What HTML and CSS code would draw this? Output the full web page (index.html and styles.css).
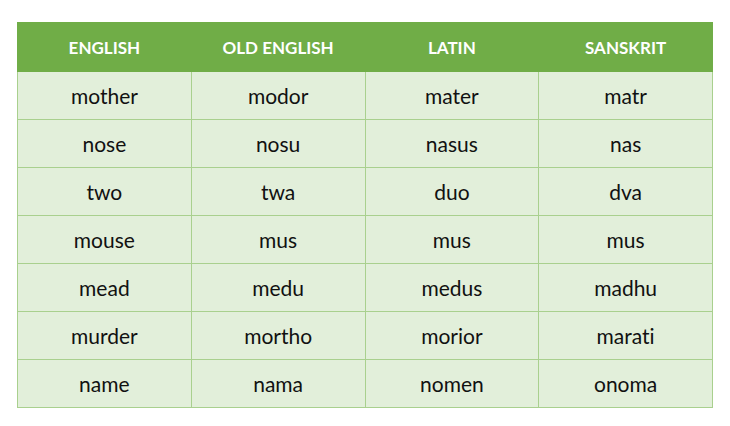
FILE: index.html
```html
<!DOCTYPE html>
<html>
<head>
<meta charset="utf-8">
<link rel="stylesheet" href="styles.css">
</head>
<body>
<table class="words">
<thead>
<tr><th>ENGLISH</th><th>OLD ENGLISH</th><th>LATIN</th><th>SANSKRIT</th></tr>
</thead>
<tbody>
<tr><td>mother</td><td>modor</td><td>mater</td><td>matr</td></tr>
<tr><td>nose</td><td>nosu</td><td>nasus</td><td>nas</td></tr>
<tr><td>two</td><td>twa</td><td>duo</td><td>dva</td></tr>
<tr><td>mouse</td><td>mus</td><td>mus</td><td>mus</td></tr>
<tr><td>mead</td><td>medu</td><td>medus</td><td>madhu</td></tr>
<tr><td>murder</td><td>mortho</td><td>morior</td><td>marati</td></tr>
<tr><td>name</td><td>nama</td><td>nomen</td><td>onoma</td></tr>
</tbody>
</table>
</body>
</html>
```
FILE: styles.css
```css
html, body {
  margin: 0;
  background: #ffffff;
}
body {
  padding: 22px 0 0 17px;
  font-family: "Lato", "Open Sans", sans-serif;
  font-variant-ligatures: none;
}
.words {
  border-collapse: collapse;
  table-layout: fixed;
  width: 696px;
}
.words th {
  background: #70ad47;
  color: #ffffff;
  font-weight: bold;
  font-size: 17px;
  height: 48px;
  padding: 0;
  text-align: center;
  border: 1px solid #70ad47;
}
.words td {
  background: #e2efda;
  color: #111111;
  font-size: 21px;
  height: 47px;
  padding: 0;
  text-align: center;
  border: 1px solid #a9d08e;
}
```
